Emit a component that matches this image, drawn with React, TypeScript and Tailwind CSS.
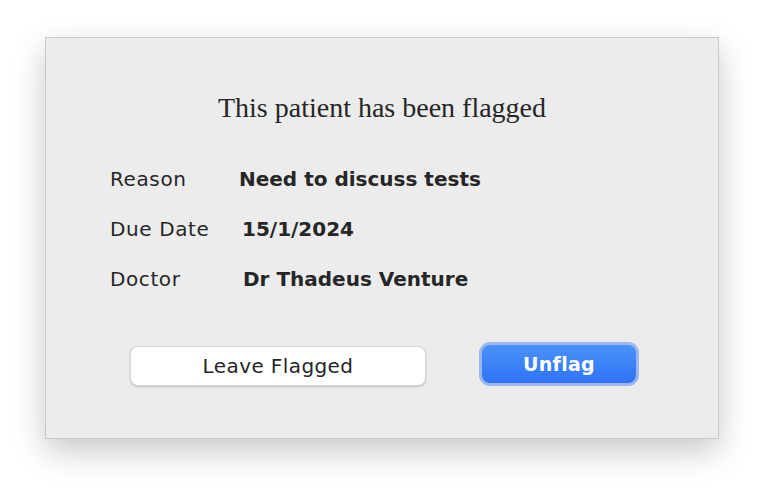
export default function App() {
  const rows = [
    { label: "Reason", value: "Need to discuss tests", shift: "pl-0" },
    { label: "Due Date", value: "15/1/2024", shift: "pl-[3px]" },
    { label: "Doctor", value: "Dr Thadeus Venture", shift: "pl-[4px]" },
  ];

  return (
    <div className="w-[764px] h-[492px] bg-white pt-[37px] pl-[45px]">
      <div className="w-[674px] h-[402px] bg-[#ececec] border border-[#c9c9c9] shadow-[0_12px_30px_rgba(0,0,0,0.22)] flex flex-col">
        <h1 className="mt-[55px] text-center text-[28px] leading-[30px] text-[#262626] font-['Liberation_Serif',serif]">
          This patient has been flagged
        </h1>

        {/* details */}
        <div className="mt-[43px] ml-[64px] flex flex-col gap-[25px] font-['DejaVu_Sans',sans-serif] text-[#262626]">
          {rows.map((row) => (
            <div key={row.label} className="flex items-center h-[25px]">
              <span className="w-[129px] text-[20px] tracking-[0.6px]">{row.label}</span>
              <span className={`${row.shift} text-[20px] font-bold`}>{row.value}</span>
            </div>
          ))}
        </div>

        {/* actions */}
        <div className="mt-[51px] ml-[84px] flex items-end font-['DejaVu_Sans',sans-serif]">
          <button className="w-[296px] h-[40px] rounded-[8px] bg-white border border-[#d4d4d4] shadow-[0_1px_2px_rgba(0,0,0,0.18)] text-[20px] tracking-[0.4px] text-[#262626]">
            Leave Flagged
          </button>
          <div className="ml-[53px] p-[3px] rounded-[11px] bg-[#9ab7ef]">
            <button className="w-[154px] h-[38px] rounded-[8px] bg-gradient-to-b from-[#4b91f8] to-[#2f73f5] text-white text-[19px] font-bold tracking-[0.3px]">
              Unflag
            </button>
          </div>
        </div>
      </div>
    </div>
  );
}
